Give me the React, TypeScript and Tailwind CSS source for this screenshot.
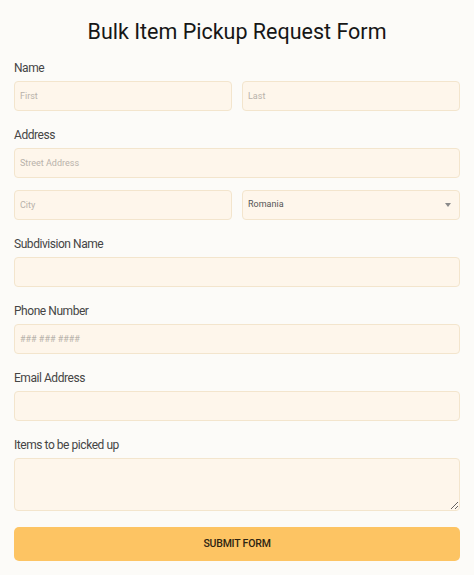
import { FC, ReactNode } from 'react';

const inputCls =
  'h-[30px] w-full rounded-[4px] border border-[#f3e5cd] bg-[#fef6eb] px-[5px] text-[9px] text-[#555] placeholder:text-[#b8b2aa] outline-none';

const Field: FC<{ label: string; children: ReactNode }> = ({ label, children }) => (
  <div className="flex flex-col">
    <label className="text-[12px] leading-[20px] tracking-[-0.45px] text-[#454545]">{label}</label>
    <div className="mt-[3px]">{children}</div>
  </div>
);

const App: FC = () => (
  <div className="min-h-[576px] w-[474px] bg-white font-['Roboto',sans-serif]">
    <form className="flex flex-col bg-[#fcfbf8] px-[14px] pb-[14px] pt-[16px]">
      <h1 className="text-center text-[21.5px] leading-[32px] text-[#161616]">
        Bulk Item Pickup Request Form
      </h1>

      <div className="mt-[10px] flex flex-col gap-[14px]">
        <Field label="Name">
          <div className="grid grid-cols-2 gap-[10px]">
            <input className={inputCls} placeholder="First" />
            <input className={inputCls} placeholder="Last" />
          </div>
        </Field>

        <Field label="Address">
          <div className="flex flex-col gap-[12px]">
            <input className={inputCls} placeholder="Street Address" />
            <div className="grid grid-cols-2 gap-[10px]">
              <input className={inputCls} placeholder="City" />
              <div className="relative">
                <select className={`${inputCls} appearance-none text-[9.5px] text-[#333]`} defaultValue="Romania">
                  <option>Romania</option>
                </select>
                <span className="pointer-events-none absolute right-[9px] top-[13px] h-0 w-0 border-x-[3.5px] border-t-[4px] border-x-transparent border-t-[#8a8a8a]" />
              </div>
            </div>
          </div>
        </Field>

        <Field label="Subdivision Name">
          <input className={inputCls} />
        </Field>

        <Field label="Phone Number">
          <input className={inputCls} placeholder="### ### ####" />
        </Field>

        <Field label="Email Address">
          <input className={inputCls} />
        </Field>

        <Field label="Items to be picked up">
          <textarea className={`${inputCls} block h-[53px] py-1`} />
        </Field>

        <button
          type="button"
          className="mt-[2px] h-[34px] w-full rounded-[5px] bg-[#fdc463] text-[10.5px] font-medium tracking-[-0.2px] text-[#2e2512]"
        >
          SUBMIT FORM
        </button>
      </div>
    </form>
  </div>
);

export default App;
